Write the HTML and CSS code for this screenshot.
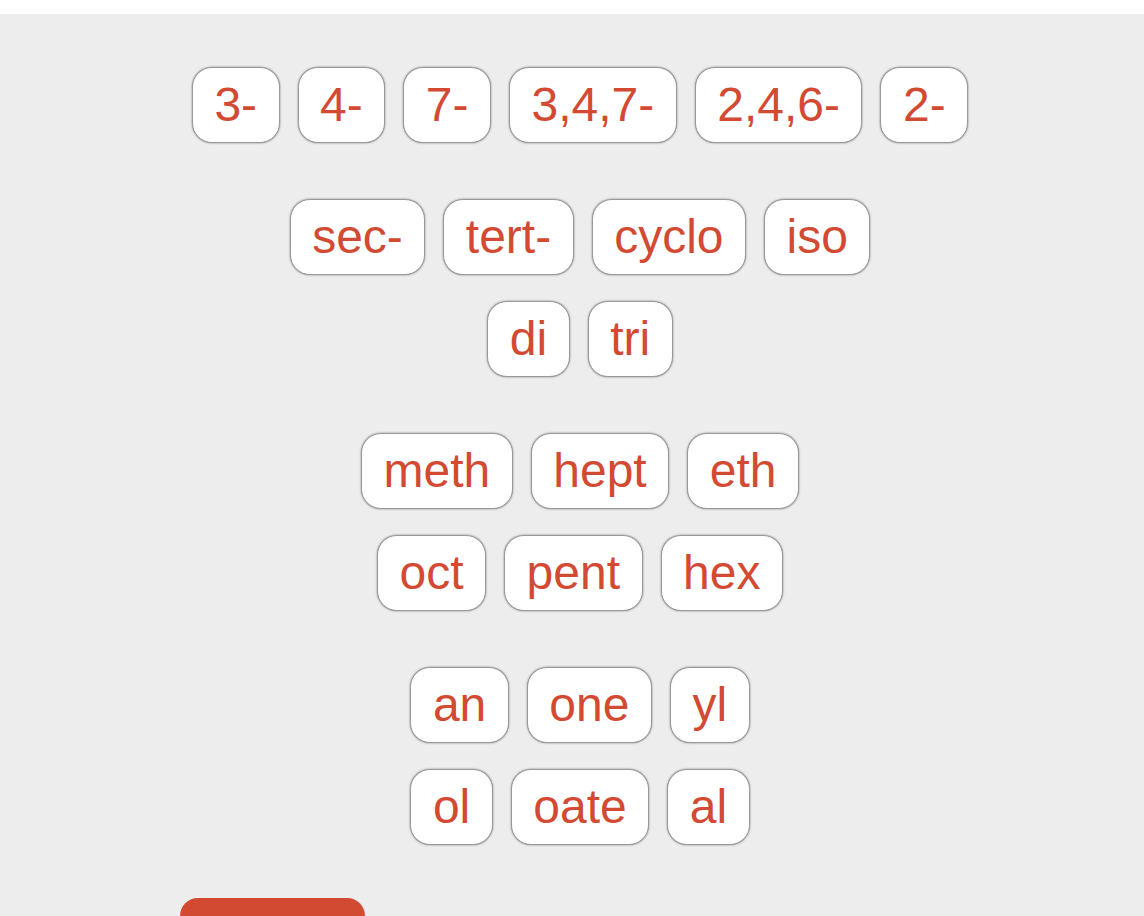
FILE: index.html
```html
<!DOCTYPE html>
<html>
<head>
<meta charset="utf-8">
<title>Name builder</title>
<link rel="stylesheet" href="styles.css">
</head>
<body>
<div class="main">
  <div class="page">
    <div class="group">
      <div class="row">
        <button class="chip">3-</button>
        <button class="chip">4-</button>
        <button class="chip">7-</button>
        <button class="chip">3,4,7-</button>
        <button class="chip">2,4,6-</button>
        <button class="chip">2-</button>
      </div>
    </div>

    <div class="group">
      <div class="row">
        <button class="chip">sec-</button>
        <button class="chip">tert-</button>
        <button class="chip">cyclo</button>
        <button class="chip">iso</button>
      </div>
      <div class="row">
        <button class="chip">di</button>
        <button class="chip">tri</button>
      </div>
    </div>

    <div class="group">
      <div class="row">
        <button class="chip">meth</button>
        <button class="chip">hept</button>
        <button class="chip">eth</button>
      </div>
      <div class="row">
        <button class="chip">oct</button>
        <button class="chip">pent</button>
        <button class="chip">hex</button>
      </div>
    </div>

    <div class="group">
      <div class="row">
        <button class="chip">an</button>
        <button class="chip">one</button>
        <button class="chip">yl</button>
      </div>
      <div class="row">
        <button class="chip">ol</button>
        <button class="chip">oate</button>
        <button class="chip">al</button>
      </div>
    </div>

    <div class="actions">
      <button class="submit">Check</button>
    </div>
  </div>
</div>
</body>
</html>
```

FILE: styles.css
```css
body {
  margin: 0;
  background: #ffffff;
  font-family: "Liberation Sans", Arial, sans-serif;
}

.main {
  margin-top: 14px;
  background: #ededed;
  min-height: 902px;
  padding-top: 53px;
}

.page {
  width: 800px;
  margin: 0 auto;
  padding-left: 16px;
}

.group {
  display: flex;
  flex-direction: column;
  gap: 26px;
  margin-bottom: 56px;
}

.row {
  display: flex;
  justify-content: center;
  gap: 18px;
}

.chip {
  font-family: "Liberation Sans", Arial, sans-serif;
  font-size: 48px;
  line-height: 56px;
  color: #d34a33;
  background: #ffffff;
  border: 1px solid #999999;
  box-shadow: 0 0 2px rgba(0, 0, 0, 0.5);
  border-radius: 20px;
  padding: 9px 21.5px;
  margin: 0;
}

.actions {
  margin-top: -3px;
}

.submit {
  width: 185px;
  height: 100px;
  border: none;
  border-radius: 18px;
  background: #d34a33;
  color: #ffffff;
  font-family: "Liberation Sans", Arial, sans-serif;
  font-size: 32px;
}
```
